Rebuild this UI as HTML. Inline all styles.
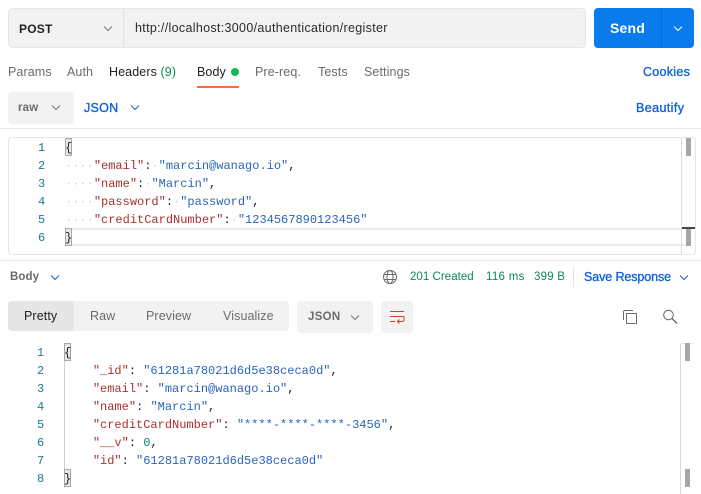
<!DOCTYPE html>
<html><head><meta charset="utf-8">
<style>
html,body{margin:0;padding:0;background:#fff}
#p{position:relative;width:701px;height:494px;overflow:hidden;background:#fff;font-family:"Liberation Sans",sans-serif;font-size:12px;color:#212121}
#p div,#p svg,#p span.a{position:absolute}
.t{white-space:nowrap;line-height:16px;height:16px}
.g{color:#6b6b6b}
.tb{font-size:12.5px;letter-spacing:.1px}
.b{color:#0f62d6;font-size:12.5px;letter-spacing:.28px;-webkit-text-stroke:.35px #0f62d6}
.c{white-space:pre;font-family:"Liberation Mono",monospace;font-size:12px;line-height:18px;height:18px;color:#212121}
.n{font-family:"Liberation Mono",monospace;font-size:12px;line-height:18px;height:18px;color:#237893;width:12px}
i{font-style:normal}
.k{color:#a8312f}.s{color:#2a66b8}.d{color:#0b8a74}.w{color:#d4d4d4}
.br{background:#e8e8e8;border:1px solid #a8a8a8;box-sizing:border-box;width:7px;height:18px}
.th{background:#a6a6a6;width:5px;height:18px}
</style></head><body><div id="p">

<!-- URL bar -->
<div style="left:8px;top:8px;width:578px;height:40px;background:#f2f2f2;border:1px solid #e6e6e6;box-sizing:border-box;border-radius:4px"></div>
<div style="left:123px;top:9px;width:1px;height:38px;background:#e4e4e4"></div>
<div class="t" style="left:19px;top:21px;font-weight:bold;font-size:12px;letter-spacing:.2px">POST</div>
<svg style="left:102px;top:25px" width="12" height="8" viewBox="0 0 12 8"><path d="M2 1.500L6 5.500L10 1.500" fill="none" stroke="#777" stroke-width="1"/></svg>
<div class="t" style="left:135px;top:20px;font-size:12.5px;letter-spacing:.32px;color:#2b2b2b">http://localhost:3000/authentication/register</div>

<!-- Send -->
<div style="left:594px;top:8px;width:100px;height:40px;background:#097bed;border-radius:4px"></div>
<div style="left:661px;top:8px;width:1px;height:40px;background:#0a6bd0"></div>
<div class="t" style="left:610px;top:20px;color:#fff;font-weight:bold;font-size:14px;letter-spacing:.2px">Send</div>
<svg style="left:672px;top:25px" width="12" height="8" viewBox="0 0 12 8"><path d="M2 1.500L6 5.500L10 1.500" fill="none" stroke="#fff" stroke-width="1"/></svg>

<!-- Tabs -->
<div class="t g tb" style="left:8px;top:64px">Params</div>
<div class="t g tb" style="left:67px;top:64px">Auth</div>
<div class="t tb" style="left:109px;top:64px;color:#212121">Headers <span style="color:#0c8a55">(9)</span></div>
<div class="t tb" style="left:197px;top:64px;color:#212121">Body</div>
<div style="left:231px;top:68px;width:8px;height:8px;border-radius:50%;background:#0cbb52"></div>
<div style="left:197px;top:86px;width:42px;height:2px;background:#ff6c37"></div>
<div class="t g tb" style="left:255px;top:64px">Pre-req.</div>
<div class="t g tb" style="left:318px;top:64px">Tests</div>
<div class="t g tb" style="left:364px;top:64px">Settings</div>
<div class="t b" style="left:643px;top:64px">Cookies</div>

<!-- Body type row -->
<div style="left:8px;top:92px;width:66px;height:32px;background:#f2f2f2;border-radius:4px"></div>
<div class="t" style="left:18px;top:100px;font-size:11.5px;font-weight:bold;color:#6b6b6b;letter-spacing:.2px">raw</div>
<svg style="left:50px;top:104px" width="12" height="8" viewBox="0 0 12 8"><path d="M2 1.500L6 5.500L10 1.500" fill="none" stroke="#777" stroke-width="1"/></svg>
<div class="t b" style="left:84px;top:100px">JSON</div>
<svg style="left:129px;top:104px" width="12" height="8" viewBox="0 0 12 8"><path d="M2 1.500L6 5.500L10 1.500" fill="none" stroke="#0f62d6" stroke-width="1"/></svg>
<div class="t b" style="left:636px;top:100px;letter-spacing:.4px">Beautify</div>
<div style="left:0;top:128px;width:701px;height:1px;background:#e8e8e8"></div>

<!-- Request editor -->
<div style="left:8px;top:137px;width:688px;height:118px;border:1px solid #e6e6e6;box-sizing:border-box;border-radius:4px"></div>
<div style="left:65px;top:228px;width:617px;height:2px;background:#ececec"></div>
<div style="left:65px;top:244px;width:620px;height:2px;background:#ececec"></div>
<div style="left:681px;top:138px;width:1px;height:116px;background:#dcdcdc"></div>
<div class="th" style="left:686px;top:138px"></div>
<div class="th" style="left:686px;top:229px;height:17px"></div>
<div style="left:682px;top:227px;width:13px;height:2px;background:#444"></div>

<div class="n" style="left:38px;top:139px">1</div>
<div class="n" style="left:38px;top:157px">2</div>
<div class="n" style="left:38px;top:175px">3</div>
<div class="n" style="left:38px;top:193px">4</div>
<div class="n" style="left:38px;top:211px">5</div>
<div class="n" style="left:38px;top:229px">6</div>

<div class="br" style="left:65px;top:138px"></div>
<div class="br" style="left:65px;top:228px"></div>
<div class="c" style="left:65px;top:139px">{</div>
<div class="c" style="left:65px;top:157px"><i class="w">····</i><i class="k">"email"</i>:<i class="w">·</i><i class="s">"marcin@wanago.io"</i>,</div>
<div class="c" style="left:65px;top:175px"><i class="w">····</i><i class="k">"name"</i>:<i class="w">·</i><i class="s">"Marcin"</i>,</div>
<div class="c" style="left:65px;top:193px"><i class="w">····</i><i class="k">"password"</i>:<i class="w">·</i><i class="s">"password"</i>,</div>
<div class="c" style="left:65px;top:211px"><i class="w">····</i><i class="k">"creditCardNumber"</i>:<i class="w">·</i><i class="s">"1234567890123456"</i></div>
<div class="c" style="left:65px;top:229px">}</div>

<div style="left:0;top:260px;width:701px;height:1px;background:#e8e8e8"></div>

<!-- Response meta -->
<div class="t" style="left:10px;top:269px;font-size:11.5px;font-weight:bold;color:#6b6b6b;letter-spacing:.1px">Body</div>
<svg style="left:49px;top:274px" width="12" height="8" viewBox="0 0 12 8"><path d="M2 1.500L6 5.500L10 1.500" fill="none" stroke="#0f62d6" stroke-width="1"/></svg>
<svg style="left:382px;top:269px" width="16" height="16" viewBox="0 0 16 16" fill="none" stroke="#6b6b6b" stroke-width="1"><circle cx="8" cy="8" r="6.500"/><ellipse cx="8" cy="8" rx="3" ry="6.500"/><path d="M2 5.500H14M2 10.500H14"/></svg>
<div class="t" style="left:410px;top:269px;font-size:11.5px;color:#0c8a55;letter-spacing:.04px">201 Created</div>
<div class="t" style="left:486px;top:269px;font-size:11.5px;color:#0c8a55;letter-spacing:.3px">116 ms</div>
<div class="t" style="left:534px;top:269px;font-size:11.5px;color:#0c8a55;letter-spacing:.22px">399 B</div>
<div style="left:573px;top:267px;width:1px;height:20px;background:#e4e4e4"></div>
<div class="t b" style="left:584px;top:269px;letter-spacing:-.1px">Save Response</div>
<svg style="left:678px;top:274px" width="12" height="8" viewBox="0 0 12 8"><path d="M2 1.500L6 5.500L10 1.500" fill="none" stroke="#0f62d6" stroke-width="1"/></svg>

<!-- Response toolbar -->
<div style="left:8px;top:301px;width:281px;height:30px;background:#f2f2f2;border-radius:4px"></div>
<div style="left:8px;top:301px;width:66px;height:30px;background:#e6e6e6;border-radius:4px 0 0 4px"></div>
<div class="t tb" style="left:24px;top:308px;color:#212121">Pretty</div>
<div class="t g tb" style="left:90px;top:308px">Raw</div>
<div class="t g tb" style="left:146px;top:308px">Preview</div>
<div class="t g tb" style="left:223px;top:308px">Visualize</div>
<div style="left:297px;top:301px;width:76px;height:32px;background:#f2f2f2;border-radius:4px"></div>
<div class="t" style="left:308px;top:309px;font-size:11.5px;font-weight:bold;color:#6b6b6b;letter-spacing:.3px">JSON</div>
<svg style="left:349px;top:314px" width="12" height="8" viewBox="0 0 12 8"><path d="M2 1.500L6 5.500L10 1.500" fill="none" stroke="#777" stroke-width="1"/></svg>
<div style="left:381px;top:301px;width:32px;height:32px;background:#f2f2f2;border-radius:4px"></div>
<svg style="left:389px;top:309px" width="16" height="16" viewBox="0 0 16 16" fill="none" stroke="#d8401b" stroke-width="1"><path d="M1 2.500H15M1 7.500H15M1 12.500H6M15 7.500V10.500Q15 12.500 13 12.500H8.500M10.500 10.500L8.500 12.500L10.500 14.500"/></svg>
<svg style="left:622px;top:309px" width="16" height="16" viewBox="0 0 16 16" fill="none" stroke="#6b6b6b" stroke-width="1"><rect x="4.500" y="4.500" width="10" height="10"/><path d="M11 1.500H3Q1.500 1.500 1.500 3V11"/></svg>
<svg style="left:662px;top:309px" width="16" height="16" viewBox="0 0 16 16" fill="none" stroke="#6b6b6b" stroke-width="1"><circle cx="6.500" cy="6" r="4.800"/><path d="M10 9.500L15 14.500" stroke-width="1.400"/></svg>

<!-- Response editor -->
<div style="left:64px;top:343px;width:1px;height:145px;background:#d0d0d0"></div>
<div style="left:680px;top:343px;width:1px;height:151px;background:#d8d8d8"></div>
<div style="left:680px;top:343px;width:14px;height:1px;background:#ececec"></div>
<div class="th" style="left:685px;top:343px"></div>
<div class="th" style="left:685px;top:469px"></div>

<div class="n" style="left:37px;top:344px">1</div>
<div class="n" style="left:37px;top:362px">2</div>
<div class="n" style="left:37px;top:380px">3</div>
<div class="n" style="left:37px;top:398px">4</div>
<div class="n" style="left:37px;top:416px">5</div>
<div class="n" style="left:37px;top:434px">6</div>
<div class="n" style="left:37px;top:452px">7</div>
<div class="n" style="left:37px;top:470px">8</div>

<div class="br" style="left:64px;top:343px"></div>
<div class="br" style="left:64px;top:469px"></div>
<div class="c" style="left:64px;top:344px">{</div>
<div class="c" style="left:64px;top:362px">    <i class="k">"_id"</i>: <i class="s">"61281a78021d6d5e38ceca0d"</i>,</div>
<div class="c" style="left:64px;top:380px">    <i class="k">"email"</i>: <i class="s">"marcin@wanago.io"</i>,</div>
<div class="c" style="left:64px;top:398px">    <i class="k">"name"</i>: <i class="s">"Marcin"</i>,</div>
<div class="c" style="left:64px;top:416px">    <i class="k">"creditCardNumber"</i>: <i class="s">"****-****-****-3456"</i>,</div>
<div class="c" style="left:64px;top:434px">    <i class="k">"__v"</i>: <i class="d">0</i>,</div>
<div class="c" style="left:64px;top:452px">    <i class="k">"id"</i>: <i class="s">"61281a78021d6d5e38ceca0d"</i></div>
<div class="c" style="left:64px;top:470px">}</div>

</div></body></html>
